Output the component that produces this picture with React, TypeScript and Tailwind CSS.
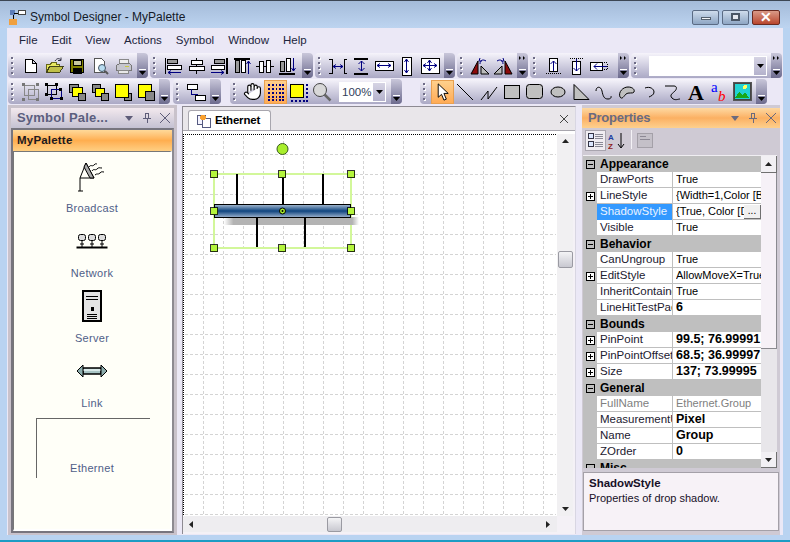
import type { ReactNode } from "react"
import { Hand } from "lucide-react"

const navy = "#000080"

function Ico({ children }: { children: ReactNode }) {
  return (
    <svg width="22" height="22" viewBox="0 0 22 22" fill="none" stroke="#000" shapeRendering="crispEdges">
      {children}
    </svg>
  )
}

const box = (x: number, y: number, w: number, h: number, fill = "#fff", stroke = "#000") => (
  <rect x={x + 0.5} y={y + 0.5} width={w} height={h} fill={fill} stroke={stroke} />
)

const icons: Record<string, ReactNode> = {
  newDoc: <path d="M5.500 4.500h7l4 4v9h-11z M12.500 4.500v4h4" fill="#fff" />,
  open: (
    <>
      <path d="M3.500 9.500h4l1-2h5v2h3v8h-13z" fill="#e8e860" stroke="#66661a" />
      <path d="M3.500 17.500l3-6h14l-4 6z" fill="#c0c048" stroke="#44441a" />
      <path d="M12 6c2-3 4-3 6-1M18 2.500v3h-3" stroke="#334" shapeRendering="auto" />
    </>
  ),
  save: (
    <>
      <rect x="4.500" y="4.500" width="13" height="13" fill="#808000" stroke="#000" />
      {box(7, 5, 8, 5, "#c8c8a0")}
      <rect x="7" y="13" width="8" height="5" fill="#000" />
    </>
  ),
  preview: (
    <>
      <path d="M5.500 3.500h7l3 3v11h-10z" fill="#fff" stroke="#555" />
      <circle cx="13" cy="13" r="3.500" fill="#b8dcf0" stroke="#456" shapeRendering="auto" />
      <path d="M16 16l3 3" stroke="#555" strokeWidth="2" shapeRendering="auto" />
    </>
  ),
  print: (
    <>
      <path d="M7.500 4.500h9v5h-9z" fill="#eee" stroke="#888" />
      <path d="M4.500 10.500l3-2h10l2 2v5h-15z" fill="#c6c6ce" stroke="#777" />
      <path d="M6.500 15.500h10v3h-10z" fill="#e8e8e8" stroke="#888" />
      <path d="M13 11h4" stroke="#c8c840" />
    </>
  ),
  alignL: (
    <>
      <path d="M3.500 3v16" />
      {box(5, 4, 10, 4, "#999")}
      {box(5, 10, 14, 4)}
      <path d="M6 17.500h13M6 17.500l3-2M6 17.500l3 2" stroke={navy} shapeRendering="auto" />
    </>
  ),
  alignC: (
    <>
      <path d="M11.500 3v16" />
      {box(6, 5, 11, 4, "#fff")}
      {box(4, 11, 15, 4)}
    </>
  ),
  alignR: (
    <>
      <path d="M18.500 3v16" strokeWidth="2" />
      {box(6, 4, 10, 4, "#999")}
      {box(3, 10, 13, 4)}
      <path d="M3 17.500h13M16 17.500l-3-2M16 17.500l-3 2" stroke={navy} shapeRendering="auto" />
    </>
  ),
  alignT: (
    <>
      <path d="M3 3.500h16" strokeWidth="2" />
      {box(4, 5, 4, 12, "#999")}
      {box(10, 5, 4, 12)}
      <path d="M17.500 6v13M17.500 6l-2 3M17.500 6l2 3" stroke={navy} shapeRendering="auto" />
    </>
  ),
  alignM: (
    <>
      <path d="M2 11.500h18" />
      {box(5, 6, 4, 11, "#fff")}
      {box(12, 5, 4, 12)}
    </>
  ),
  alignB: (
    <>
      <path d="M2 18.500h16" strokeWidth="2" />
      {box(3, 6, 4, 10, "#999")}
      {box(9, 3, 4, 13)}
      <path d="M16.500 3v13M16.500 16l-2-3M16.500 16l2-3" stroke={navy} shapeRendering="auto" />
    </>
  ),
  spaceH: (
    <>
      <path d="M2 4.500h3v14H2M20 4.500h-3v14h3" />
      <path d="M6 11.500h10M6 11.500l3-2M6 11.500l3 2M16 11.500l-3-2M16 11.500l-3 2" stroke={navy} shapeRendering="auto" />
    </>
  ),
  spaceV: (
    <>
      <path d="M4 3.500h14M4 18.500h14" strokeWidth="2" />
      <path d="M11.500 6v10M11.500 6l-3 3M11.500 6l3 3M11.500 16l-3-3M11.500 16l3-3" stroke={navy} shapeRendering="auto" />
    </>
  ),
  sameW: (
    <>
      {box(2, 6, 18, 9)}
      <path d="M4 10.500h14M4 10.500l3-2M4 10.500l3 2M18 10.500l-3-2M18 10.500l-3 2" stroke={navy} shapeRendering="auto" />
    </>
  ),
  sameH: (
    <>
      {box(6, 2, 9, 18)}
      <path d="M10.500 4v14M10.500 4l-2 3M10.500 4l2 3M10.500 18l-2-3M10.500 18l2-3" stroke={navy} shapeRendering="auto" />
    </>
  ),
  sameB: (
    <>
      {box(2, 3, 18, 15)}
      <path
        d="M4 10.500h14M4 10.500l3-2M4 10.500l3 2M18 10.500l-3-2M18 10.500l-3 2M10.500 5v11M10.500 5l-2 3M10.500 5l2 3M10.500 16l-2-3M10.500 16l2-3"
        stroke={navy}
        shapeRendering="auto"
      />
    </>
  ),
  flipH: (
    <g shapeRendering="auto">
      <path d="M9 6v13H2z" fill="#8b0a0a" stroke="#000" />
      <path d="M12 11v8h8z" fill="#bbb" stroke="#000" />
      <path d="M11 9c0-4 3-5 6-3M11 3l-1 3 3 0" stroke={navy} />
    </g>
  ),
  flipV: (
    <g shapeRendering="auto">
      <path d="M13 6v13h7z" fill="#8b0a0a" stroke="#000" />
      <path d="M10 11v8H2z" fill="#bbb" stroke="#000" />
      <path d="M11 9c0-4-3-5-6-3M11 3l1 3-3 0" stroke={navy} />
    </g>
  ),
  front: (
    <>
      {box(7, 3, 8, 13)}
      <path d="M4 18.500h15" stroke="#000" strokeDasharray="1 1" />
      <path d="M11.500 6v10M11.500 6l-3 3M11.500 6l3 3" stroke={navy} shapeRendering="auto" />
    </>
  ),
  back: (
    <>
      <path d="M5 3.500h14" strokeDasharray="1 1" />
      {box(7, 6, 8, 13)}
      <path d="M11.500 4v12M11.500 16l-3-3M11.500 16l3-3" stroke={navy} shapeRendering="auto" />
    </>
  ),
  toSide: (
    <>
      {box(2, 7, 12, 8)}
      <path d="M14 7.500h5v7h-5" strokeDasharray="1 1" />
      <path d="M6 11.500h13M6 11.500l3-3M6 11.500l3 3" stroke={navy} shapeRendering="auto" />
    </>
  ),
  group: (
    <>
      {box(4, 4, 10, 10, "none", "#888")}
      {box(8, 8, 10, 10, "none", "#888")}
      <g fill="#777" stroke="none">
        <rect x="2" y="2" width="3" height="3" />
        <rect x="16" y="2" width="3" height="3" />
        <rect x="2" y="17" width="3" height="3" />
        <rect x="16" y="17" width="3" height="3" />
      </g>
    </>
  ),
  ungroup: (
    <>
      {box(4, 4, 9, 9, "none", "#000")}
      {box(8, 8, 10, 9, "none", navy)}
      <g fill="#000" stroke="none">
        <rect x="2" y="2" width="3" height="3" />
        <rect x="12" y="2" width="3" height="3" />
        <rect x="16" y="7" width="3" height="3" />
        <rect x="2" y="12" width="3" height="3" />
        <rect x="7" y="16" width="3" height="3" />
        <rect x="17" y="16" width="3" height="3" />
      </g>
    </>
  ),
  ordA: (
    <>
      {box(3, 3, 9, 8, "#888")}
      {box(6, 6, 10, 9, "#ffff00")}
      {box(12, 12, 7, 7, "#888")}
    </>
  ),
  ordB: (
    <>
      {box(3, 3, 8, 8, "#888")}
      {box(6, 7, 9, 8, "#ffff00")}
      {box(12, 12, 7, 7, "#888")}
    </>
  ),
  ordC: (
    <>
      {box(12, 12, 7, 7, "#888")}
      {box(3, 3, 13, 13, "#ffff00")}
    </>
  ),
  ordD: (
    <>
      {box(3, 3, 13, 13, "#ffff00")}
      {box(10, 10, 9, 9, "#888")}
    </>
  ),
  tree: (
    <>
      {box(2, 3, 10, 5)}
      {box(10, 14, 10, 5)}
      <path d="M6.500 8v5.500h6V14" stroke={navy} />
    </>
  ),
  grid: (
    <g fill={navy} stroke="none">
      {[3, 7, 11, 15, 18].flatMap((y) =>
        [3, 7, 11, 15, 18].map((x) => <rect key={`${x}-${y}`} x={x} y={y} width="2" height="2" />),
      )}
    </g>
  ),
  snap: (
    <>
      {box(2, 3, 13, 13, "#ffff00")}
      <g fill={navy} stroke="none">
        {[3, 7, 11, 15].map((y) => (
          <rect key={y} x="18" y={y} width="2" height="2" />
        ))}
        {[3, 7, 11, 15, 18].map((x) => (
          <rect key={x} x={x} y="19" width="2" height="2" />
        ))}
      </g>
    </>
  ),
  zoom: (
    <g shapeRendering="auto">
      <circle cx="9" cy="9" r="6.500" fill="#d8d8d8" stroke="#444" />
      <path d="M13.500 13.500l6 6" stroke="#666" strokeWidth="2.500" />
    </g>
  ),
  pointer: (
    <path d="M6.500 2.500v14l3.500-3 2.500 6 2.500-1-2.500-6h4.500z" fill="#fff" stroke="#000" shapeRendering="auto" />
  ),
  line: <path d="M2 3l16 16" shapeRendering="auto" />,
  poly: <path d="M3 19l7-9v8l9-12" shapeRendering="auto" />,
  rect: box(3, 4, 15, 13, "#c0c0c0"),
  rrect: <rect x="2.500" y="3.500" width="16" height="14" rx="3" fill="#c0c0c0" stroke="#000" shapeRendering="auto" />,
  ellipse: <ellipse cx="11" cy="11" rx="7" ry="5" fill="#c0c0c0" stroke="#000" shapeRendering="auto" />,
  tri: <path d="M4 3.500v15h15z" fill="#c0c0c0" stroke="#000" shapeRendering="auto" />,
  curve: <path d="M3 10c0-5 5-5 6 0s2 8 6 8 3-3 3-3" shapeRendering="auto" />,
  blob: (
    <path d="M4 16c-2-5 3-10 8-10s7 3 6 5-6 0-8 2-4 6-6 3z" fill="#c0c0c0" stroke="#000" shapeRendering="auto" />
  ),
  arc: <path d="M6 7c5-2 9 1 9 4s-3 4-5 5" shapeRendering="auto" />,
  wave: <path d="M3 5h9c3 0 3 3 1 5s-6 4-3 7 6 1 8 1" shapeRendering="auto" />,
  text: (
    <text x="11" y="19" textAnchor="middle" fill="#000" stroke="none" fontSize="22" fontWeight="700" fontFamily="'Liberation Serif', serif">
      A
    </text>
  ),
  ab: (
    <g stroke="none" fontFamily="'Liberation Serif', serif" fontSize="15">
      <text x="3" y="11" fill="#0000ff">a</text>
      <text x="10" y="20" fill="#ff0000" fontStyle="italic">b</text>
    </g>
  ),
  picture: (
    <>
      {box(3, 2, 16, 16, "#22d3d3", "#444")}
      <rect x="2" y="1" width="18" height="18" stroke="#555" />
      <circle cx="14" cy="6" r="2" fill="#ffff60" stroke="none" />
      <path d="M4 17l4-6 3 3 3-3 4 6z" fill="#18a818" stroke="none" />
    </>
  ),
}

function Grip() {
  return (
    <svg width="3" height="18" viewBox="0 0 3 18" className="absolute left-[3px] top-[4px]">
      {[0, 5, 10, 15].map((y) => (
        <g key={y}>
          <rect x="1" y={y + 1} width="2" height="2" fill="#fff" />
          <rect x="0" y={y} width="2" height="2" fill="#6e6c86" />
        </g>
      ))}
    </svg>
  )
}

function EndCap({ overflow }: { overflow?: boolean }) {
  return (
    <div className="ml-auto w-[11px] self-stretch shrink-0 flex flex-col items-center justify-between py-[3px] rounded-r-[4px] bg-gradient-to-b from-[#c9c7da] to-[#6d6b8e]">
      <svg width="7" height="5" viewBox="0 0 7 5" className={overflow ? "" : "invisible"}>
        <path d="M0 0l2 2-2 2zM4 0l2 2-2 2z" fill="#000" />
      </svg>
      <svg width="7" height="6" viewBox="0 0 7 6">
        <rect x="0" y="0" width="7" height="1" fill="#fff" />
        <path d="M0 2h7L3.500 6z" fill="#000" />
      </svg>
    </div>
  )
}

function Tool({ name, active }: { name?: string; active?: boolean }) {
  return (
    <div
      className={`w-[23px] h-[24px] shrink-0 flex items-center justify-center ${
        active ? "bg-gradient-to-b from-[#ffd08c] to-[#ffab55] border border-[#e8a050]" : ""
      }`}
    >
      {name === "hand" ? <Hand size={19} fill="#fff" strokeWidth={1.4} color="#000" /> : name ? <Ico>{icons[name]}</Ico> : null}
    </div>
  )
}

function Bar({
  width,
  className = "",
  overflow,
  children,
}: {
  width: string
  className?: string
  overflow?: boolean
  children: ReactNode
}) {
  return (
    <div
      className={`relative flex items-center h-full pl-[11px] rounded-[4px] bg-gradient-to-b from-[#f6f4fb] to-[#aba9c5] ${width} ${className}`}
    >
      <Grip />
      {children}
      <EndCap overflow={overflow} />
    </div>
  )
}

function Combo({ width, className = "", value }: { width: string; className?: string; value?: string }) {
  return (
    <div className={`flex h-[20px] bg-white border border-white ${width} ${className}`}>
      <div className="flex-1 min-w-0 pl-[2px] text-[11.5px] leading-[18px] whitespace-nowrap text-[#30405a]">{value}</div>
      <div className="w-[12px] shrink-0 bg-gradient-to-b from-[#d6d4e4] to-[#b4b2cc] flex items-center justify-center">
        <svg width="7" height="4" viewBox="0 0 7 4">
          <path d="M0 0h7L3.500 4z" fill="#000" />
        </svg>
      </div>
    </div>
  )
}

function PanelButtons({ muted }: { muted?: boolean }) {
  const c = muted ? "#6a6a7e" : "#5e5c78"
  return (
    <div className="ml-auto flex items-center">
      <svg width="8" height="5" viewBox="0 0 8 5">
        <path d="M0 0h8L4 5z" fill={c} />
      </svg>
      <svg width="12" height="12" viewBox="0 0 12 12" className="ml-[8px]" fill="none" stroke={c} shapeRendering="crispEdges">
        <path d="M4.500 1.500h3v5h-3zM2 6.500h8M6.500 7v4" />
      </svg>
      <svg width="12" height="12" viewBox="0 0 12 12" className="ml-[6px] mr-[3px]" fill="none" stroke={c}>
        <path d="M1 1l10 10M11 1L1 11" />
      </svg>
    </div>
  )
}

const palette: [string, ReactNode][] = [
  [
    "Broadcast",
    <svg key="b" width="32" height="32" viewBox="0 0 32 32" fill="none" stroke="#000" className="ml-[2px]">
      <path d="M3 18v13M1 31h5" />
      <path d="M3 18h14L9 3z" />
      <path d="M9 3l8 15h-4L7 7z" fill="#aaa" />
      <path d="M12 7c2-3 3 0 5-2s2-1 3-1M15 11c2-3 3 0 5-2s2-1 5-1M18 15c2-2 3 0 5-2s2-1 4-1" />
    </svg>,
  ],
  [
    "Network",
    <svg key="n" width="32" height="16" viewBox="0 0 32 16" fill="none" stroke="#000">
      <path d="M0.500 14.500h31" strokeWidth="2" />
      {[6, 16, 26].map((x) => (
        <g key={x}>
          <rect x={x - 3.5} y="1.500" width="7" height="6" rx="2" fill="#ddd" />
          <path d={`M${x} 8v6M${x - 2} 11h4`} />
        </g>
      ))}
    </svg>,
  ],
  [
    "Server",
    <svg key="s" width="20" height="32" viewBox="0 0 20 32" fill="none" stroke="#000" shapeRendering="crispEdges">
      <rect x="1" y="1" width="18" height="30" fill="#e4e4e4" strokeWidth="2" />
      <path d="M4 6.500h12M4 9.500h12" />
      <rect x="9" y="17" width="2" height="3" fill="#000" />
      <path d="M5 24.500h10M5 26.500h10M5 28.500h10" />
    </svg>,
  ],
  [
    "Link",
    <svg key="l" width="32" height="14" viewBox="0 0 32 14" fill="none" stroke="#000">
      <path d="M7 4h18v6H7z" fill="#a8c4c4" strokeWidth="1.600" />
      <path d="M7 6h18" stroke="#e8f4f4" strokeWidth="1.500" />
      <path d="M7 1L1 7l6 6zM25 1l6 6-6 6z" fill="#8cacac" />
    </svg>,
  ],
]

type Row = { cat?: string; n?: string; v?: string; plus?: boolean; bold?: boolean; off?: boolean; sel?: boolean }

const rows: Row[] = [
  { cat: "Appearance" },
  { n: "DrawPorts", v: "True" },
  { n: "LineStyle", v: "{Width=1,Color [Black]}", plus: true },
  { n: "ShadowStyle", v: "{True, Color [DarkGray]}", sel: true },
  { n: "Visible", v: "True" },
  { cat: "Behavior" },
  { n: "CanUngroup", v: "True" },
  { n: "EditStyle", v: "AllowMoveX=True", plus: true },
  { n: "InheritContainerStyle", v: "True" },
  { n: "LineHitTestPadding", v: "6", bold: true },
  { cat: "Bounds" },
  { n: "PinPoint", v: "99.5; 76.99991", plus: true, bold: true },
  { n: "PinPointOffset", v: "68.5; 36.99997", plus: true, bold: true },
  { n: "Size", v: "137; 73.99995", plus: true, bold: true },
  { cat: "General" },
  { n: "FullName", v: "Ethernet.Group", off: true },
  { n: "MeasurementUnit", v: "Pixel", bold: true },
  { n: "Name", v: "Group", bold: true },
  { n: "ZOrder", v: "0", bold: true },
  { cat: "Misc" },
]

function Expander({ plus }: { plus?: boolean }) {
  return (
    <svg width="9" height="9" viewBox="0 0 9 9" fill="none" stroke="#000" shapeRendering="crispEdges">
      <rect x="0.500" y="0.500" width="8" height="8" fill={plus ? "#fff" : "none"} />
      <path d={plus ? "M2 4.500h5M4.500 2v5" : "M2 4.500h5"} />
    </svg>
  )
}

function PropRow({ row }: { row: Row }) {
  if (row.cat) {
    return (
      <div className="h-[16px] shrink-0 flex items-center bg-[#bfbfbf]">
        <div className="w-[14px] flex justify-center">
          <Expander />
        </div>
        <span className="ml-[3px] text-[12px] font-bold text-black">{row.cat}</span>
      </div>
    )
  }
  return (
    <div className="h-[16px] shrink-0 flex bg-white text-[11.5px] leading-[15px]">
      <div className="w-[14px] shrink-0 bg-[#bfbfbf] flex items-center justify-center">
        {row.plus && <Expander plus />}
      </div>
      <div
        className={`w-[75px] shrink-0 pl-[3px] overflow-hidden whitespace-nowrap border-b ${
          row.sel ? "bg-[#3399ff] text-[#eaf3ff] border-[#3399ff]" : `border-[#bfbfbf] ${row.off ? "text-[#808080]" : "text-[#1c2030]"}`
        }`}
      >
        {row.n}
      </div>
      <div
        className={`flex flex-1 min-w-0 pl-[3px] border-l border-b border-[#bfbfbf] ${
          row.off ? "text-[#808080]" : "text-black"
        } ${row.bold ? "font-bold text-[12.5px]" : "text-[11px]"}`}
      >
        <span className="flex-1 min-w-0 overflow-hidden whitespace-nowrap">{row.v}</span>
        {row.sel && (
          <div className="shrink-0 mt-[1px] h-[14px] w-[17px] bg-[#f0f0f0] border-r border-b border-[#707070] text-center text-[10px] leading-[12px] text-black">
            ...
          </div>
        )}
      </div>
    </div>
  )
}

function Tri({ dir }: { dir: "u" | "d" | "l" | "r" }) {
  const d = { u: "M0 4h7L3.500 0z", d: "M0 0h7L3.500 4z", l: "M4 0v7L0 3.500z", r: "M0 0v7l4-3.500z" }[dir]
  const vertical = dir === "u" || dir === "d"
  return (
    <svg width={vertical ? 7 : 4} height={vertical ? 4 : 7} viewBox={vertical ? "0 0 7 4" : "0 0 4 7"}>
      <path d={d} fill="#222" />
    </svg>
  )
}

function Canvas() {
  const xs = Array.from({ length: 18 }, (_, i) => 203 + i * 20)
  const ys = Array.from({ length: 19 }, (_, i) => 154 + i * 20)
  const handles = [
    [214, 174],
    [282, 174],
    [351, 174],
    [214, 211],
    [351, 211],
    [214, 248],
    [282, 248],
    [351, 248],
  ]
  return (
    <svg width="374" height="382" viewBox="183 134 374 382" className="block shrink-0" shapeRendering="crispEdges">
      <defs>
        <linearGradient id="pipe" x1="0" y1="0" x2="0" y2="1">
          <stop offset="0" stopColor="#a8bcd2" />
          <stop offset="0.5" stopColor="#0f447f" />
          <stop offset="1" stopColor="#9fb4cf" />
        </linearGradient>
        <linearGradient id="fade" x1="0" y1="0" x2="1" y2="0">
          <stop offset="0" stopColor="#b3b3b3" stopOpacity="0" />
          <stop offset="0.07" stopColor="#b3b3b3" />
          <stop offset="0.95" stopColor="#b3b3b3" />
          <stop offset="1" stopColor="#b3b3b3" stopOpacity="0" />
        </linearGradient>
      </defs>
      <rect x="183" y="134" width="374" height="382" fill="#fff" />
      <g stroke="#d4d4d4" strokeDasharray="3 2">
        {xs.map((x) => (
          <path key={x} d={`M${x + 0.5} 136V514`} />
        ))}
        {ys.map((y) => (
          <path key={y} d={`M185 ${y + 0.5}H556`} />
        ))}
      </g>
      <path d="M183 134.500H556M183.500 134V516" stroke="#000" strokeDasharray="1 1" />
      <rect x="214" y="174" width="137" height="74" fill="none" stroke="#d2f79a" strokeWidth="2" />
      <rect x="224" y="217" width="135" height="8" fill="url(#fade)" />
      <g stroke="#000" strokeWidth="2">
        {[237, 283, 323].map((x) => (
          <path key={x} d={`M${x} 174V204`} />
        ))}
        {[257, 305].map((x) => (
          <path key={x} d={`M${x} 217V247`} />
        ))}
      </g>
      <rect x="214.500" y="204.500" width="136" height="13" fill="url(#pipe)" stroke="#000" />
      {handles.map(([x, y]) => (
        <rect key={`${x}-${y}`} x={x - 3.5} y={y - 3.5} width="7" height="7" fill="#b4f53c" stroke="#000" strokeWidth="0.800" />
      ))}
      <g shapeRendering="auto">
        <circle cx="282.500" cy="149" r="5.500" fill="#a8ee2c" stroke="#3a5a20" />
        <circle cx="282.500" cy="211" r="3" fill="#a8ee2c" stroke="#000" />
        <circle cx="282.500" cy="211" r="1" fill="#000" />
      </g>
    </svg>
  )
}

export default function App() {
  return (
    <div className="w-[790px] h-[542px] flex flex-col overflow-hidden bg-[#b9d3f1] border-t border-[#3c4654] border-b-2 border-b-[#1c9cc4] font-['Liberation_Sans',Arial,sans-serif] text-[#1c2030]">
      {/* title bar */}
      <div className="h-[27px] shrink-0 flex items-center pt-[5px] pl-[9px] pr-[10px] bg-gradient-to-b from-[#a4bbd9] to-[#bdd4f0]">
        <svg width="17" height="17" viewBox="0 0 17 17" shapeRendering="crispEdges">
          <rect x="1" y="1" width="5" height="5" fill="#5b7cb8" />
          <rect x="0" y="10" width="8" height="6" fill="#f0a040" />
          <rect x="9" y="1" width="7" height="4" fill="#fff" stroke="#444" />
          <path d="M4.500 6v4M4.500 4.500H9" stroke="#000" fill="none" />
        </svg>
        <span className="ml-[4px] text-[12px] text-[#141a28]">Symbol Designer - MyPalette</span>
        <div className="ml-auto flex gap-[3px]">
          <div className="w-[27px] h-[15px] rounded-[2px] border border-[#5b6b84] bg-gradient-to-b from-[#cfdcec] to-[#8ea6c4] flex items-center justify-center">
            <div className="w-[10px] h-[3px] mt-[3px] bg-[#f2f4f8] border border-[#55606e]" />
          </div>
          <div className="w-[27px] h-[15px] rounded-[2px] border border-[#5b6b84] bg-gradient-to-b from-[#cfdcec] to-[#8ea6c4] flex items-center justify-center">
            <div className="w-[9px] h-[8px] bg-[#e4e8f0] border-2 border-[#4a5666]" />
          </div>
          <div className="w-[28px] h-[15px] rounded-[2px] border border-[#6a2a20] bg-gradient-to-b from-[#d99a88] to-[#b8442c] flex items-center justify-center text-white font-bold text-[14px] leading-none">
            ✕
          </div>
        </div>
      </div>

      <div className="flex-1 min-h-0 mx-[7px] mb-[5px] flex flex-col bg-[#ebe8f6]">
        {/* menu */}
        <div className="h-[25px] shrink-0 flex items-center pl-[12px] gap-[14px] text-[11.5px] text-[#20243c]">
          {["File", "Edit", "View", "Actions", "Symbol", "Window", "Help"].map((m) => (
            <span key={m}>{m}</span>
          ))}
        </div>

        {/* toolbars */}
        <div className="h-[25px] shrink-0 flex pl-[1px] gap-[2px]">
          <Bar width="w-[140px]">
            {["newDoc", "open", "save", "preview", "print"].map((n) => (
              <Tool key={n} name={n} />
            ))}
          </Bar>
          <Bar width="w-[163px]">
            {["alignL", "alignC", "alignR", "alignT", "alignM", "alignB"].map((n) => (
              <Tool key={n} name={n} />
            ))}
          </Bar>
          <Bar width="w-[140px]">
            {["spaceH", "spaceV", "sameW", "sameH", "sameB"].map((n) => (
              <Tool key={n} name={n} />
            ))}
          </Bar>
          <Bar width="w-[71px]" overflow>
            <Tool name="flipH" />
            <Tool name="flipV" />
          </Bar>
          <Bar width="w-[99px]" overflow>
            <Tool name="front" />
            <Tool name="back" />
            <Tool name="toSide" />
          </Bar>
          <Bar width="w-[151px]" overflow>
            <Combo width="w-[118px]" className="ml-[7px]" />
          </Bar>
        </div>
        <div className="h-[26px] shrink-0 mt-[1px] flex pl-[1px] pb-[1px]">
          <Bar width="w-[162px]">
            {["group", "ungroup", "ordA", "ordB", "ordC", "ordD"].map((n) => (
              <Tool key={n} name={n} />
            ))}
          </Bar>
          <Bar width="w-[48px]" className="ml-[3px]">
            <Tool name="tree" />
          </Bar>
          <Bar width="w-[172px]" className="ml-[9px]">
            <Tool name="hand" />
            <Tool name="grid" active />
            <Tool name="snap" />
            <Tool name="zoom" />
            <Combo width="w-[47px]" className="ml-[6px]" value="100%" />
          </Bar>
          <Bar width="w-[347px]" className="ml-[18px]">
            <Tool name="pointer" active />
            {["line", "poly", "rect", "rrect", "ellipse", "tri", "curve", "blob", "arc", "wave", "text", "ab", "picture"].map(
              (n) => (
                <Tool key={n} name={n} />
              ),
            )}
          </Bar>
        </div>

        {/* docked panels */}
        <div className="flex-1 min-h-0 flex pl-[1px]">
          {/* symbol palette */}
          <div className="w-[169px] shrink-0 flex flex-col bg-[#c9c2cb] px-[3px] pt-[3px] pb-[2px]">
            <div className="h-[20px] shrink-0 flex items-center pl-[6px] bg-gradient-to-b from-[#f3e9ee] to-[#c4c1d2]">
              <span className="text-[13px] font-bold text-[#5b5e7e] tracking-[0.2px] whitespace-nowrap">Symbol Pale...</span>
              <PanelButtons />
            </div>
            <div className="flex-1 min-h-0 flex flex-col border-2 border-[#77757e] border-r-[#8d8a92]">
              <div className="h-[21px] shrink-0 pl-[4px] flex items-center text-[11.5px] font-bold text-[#1d1a20] tracking-[0.2px] bg-gradient-to-b from-[#ffd999] via-[#ffae4f] to-[#ffcf82]">
                MyPalette
              </div>
              <div className="flex-1 min-h-0 relative bg-[#fffff8] border-t border-l border-[#777] border-r-2 border-r-white border-b-2 border-b-white">
                {palette.map(([label, icon]) => (
                  <div key={String(label)} className="h-[65px] flex flex-col items-center">
                    <div className="h-[48px] flex items-center justify-center">{icon}</div>
                    <div className="h-[17px] text-[11px] leading-[17px] tracking-[0.3px] text-[#4f5e88]">{label}</div>
                  </div>
                ))}
                <div className="relative h-[65px] flex flex-col items-center">
                  <div className="absolute left-[22px] top-[6px] w-[114px] h-[60px] border-l border-t border-[#666]" />
                  <div className="mt-[48px] h-[17px] text-[11px] leading-[17px] tracking-[0.3px] text-[#4f5e88]">Ethernet</div>
                </div>
              </div>
            </div>
          </div>

          {/* designer */}
          <div className="w-[394px] shrink-0 ml-[5px] flex flex-col mt-[1px] mb-[1px] border-l border-t border-[#8d8a92] border-r border-r-[#d8d6e2] bg-[#f4f1f6]">
            <div className="h-[24px] shrink-0 flex items-end pl-[5px] bg-[#e9e6ea] border-b border-[#a8a6ae]">
              <div className="w-[83px] h-[20px] flex items-center gap-[3px] pl-[8px] bg-white border border-b-0 border-[#a8a6ae] rounded-t-[3px] text-[11.5px] tracking-[-0.2px] font-bold text-black">
                <svg width="15" height="14" viewBox="0 0 15 14" fill="none" shapeRendering="crispEdges" className="shrink-0">
                  <rect x="0.500" y="1.500" width="8" height="9" fill="#f4f4ff" stroke="#555a80" />
                  <rect x="5.500" y="4.500" width="8" height="9" fill="#fff" stroke="#555a80" />
                  <circle cx="6" cy="3.500" r="3" fill="#f8a030" />
                </svg>
                Ethernet
              </div>
              <div className="ml-auto mb-[6px] mr-[6px]">
                <svg width="10" height="10" viewBox="0 0 10 10" fill="none" stroke="#444">
                  <path d="M1 1l8 8M9 1L1 9" />
                </svg>
              </div>
            </div>
            <div className="h-[3px] shrink-0 bg-white" />
            <div className="h-[382px] shrink-0 flex">
              <Canvas />
              <div className="w-[16px] shrink-0 flex flex-col items-center bg-[#f1f0f2]">
                <div className="h-[14px] flex items-center">
                  <Tri dir="u" />
                </div>
                <div className="w-[15px] h-[17px] mt-[103px] rounded-[2px] border border-[#9a9aa2] bg-gradient-to-b from-[#f4f4f6] to-[#c8c8d0]" />
                <div className="mt-auto h-[14px] flex items-center">
                  <Tri dir="d" />
                </div>
              </div>
            </div>
            <div className="h-[16px] shrink-0 flex items-center bg-[#eeedf0] mr-[18px] pl-[6px] pr-[7px]">
              <Tri dir="l" />
              <div className="w-[15px] h-[15px] ml-[134px] rounded-[2px] border border-[#9a9aa2] bg-gradient-to-b from-[#f4f4f6] to-[#c8c8d0]" />
              <div className="ml-auto">
                <Tri dir="r" />
              </div>
            </div>
          </div>

          {/* properties */}
          <div className="w-[198px] shrink-0 ml-[6px] flex flex-col bg-[#cfcad4] pt-[3px] pb-[4px]">
            <div className="h-[20px] shrink-0 flex items-center pl-[6px] bg-gradient-to-b from-[#fdd9a2] via-[#fbb062] to-[#fdd08e]">
              <span className="text-[13px] font-bold text-[#6a6a80] tracking-[-0.2px]">Properties</span>
              <PanelButtons muted />
            </div>
            <div className="h-[27px] shrink-0 flex items-start pt-[2px] pl-[3px]">
              <div className="w-[21px] h-[21px] flex items-center justify-center bg-[#f0edf2] border border-[#a8a4ae]">
                <svg width="15" height="15" viewBox="0 0 15 15" fill="none" stroke="#334" shapeRendering="crispEdges">
                  <rect x="0.500" y="0.500" width="5" height="5" fill="#dde8ff" />
                  <rect x="0.500" y="8.500" width="5" height="5" fill="#dde8ff" />
                  <path d="M7 1.500h8M7 3.500h8M7 5.500h8M7 9.500h8M7 11.500h8M7 13.500h8" stroke="#8a8a96" />
                </svg>
              </div>
              <div className="w-[22px] h-[21px] flex items-center justify-center">
                <svg width="18" height="18" viewBox="0 0 18 18" fill="none">
                  <text x="0" y="8" fontSize="8" fontWeight="700" fill="#2040a0" fontFamily="'Liberation Sans', sans-serif">A</text>
                  <text x="0" y="17" fontSize="8" fontWeight="700" fill="#902020" fontFamily="'Liberation Sans', sans-serif">Z</text>
                  <path d="M13 1v14M10 12l3 4 3-4" stroke="#000" />
                </svg>
              </div>
              <div className="w-px h-[19px] ml-[3px] bg-[#f4f2f6]" />
              <div className="w-[16px] h-[15px] ml-[5px] mt-[3px] bg-[#c4c0c8] border border-[#a4a0a8] flex flex-col gap-[2px] p-[2px]">
                <div className="h-px w-[6px] bg-[#8c8894]" />
                <div className="h-px bg-[#8c8894]" />
              </div>
            </div>
            <div className="h-[313px] shrink-0 ml-[1px] mr-[3px] flex border-t border-[#f0eef2] overflow-hidden">
              <div className="flex-1 min-w-0 flex flex-col overflow-hidden">
                {rows.map((r) => (
                  <PropRow key={r.cat ?? r.n} row={r} />
                ))}
              </div>
              <div className="w-[16px] shrink-0 flex flex-col bg-[#e8e6ea]">
                <div className="h-[17px] shrink-0 flex items-center justify-center bg-[#f2f0f4] border-r border-b border-[#707070]">
                  <Tri dir="u" />
                </div>
                <div className="h-[176px] shrink-0 bg-[#f6f1f7] border-r border-b border-[#8a8a90]" />
                <div className="mt-auto h-[16px] shrink-0 flex items-center justify-center bg-[#f2f0f4] border-r border-b border-[#707070]">
                  <Tri dir="d" />
                </div>
              </div>
            </div>
            <div className="flex-1 min-h-0 mt-[4px] mx-[1px] px-[5px] pt-[2px] bg-[#f7f2f7] border border-[#a4a0a8] text-[11px] leading-[15px] text-[#181028]">
              <div className="font-bold text-[11.5px] leading-[16px]">ShadowStyle</div>
              <div>Properties of drop shadow.</div>
            </div>
          </div>
        </div>
      </div>
    </div>
  )
}
